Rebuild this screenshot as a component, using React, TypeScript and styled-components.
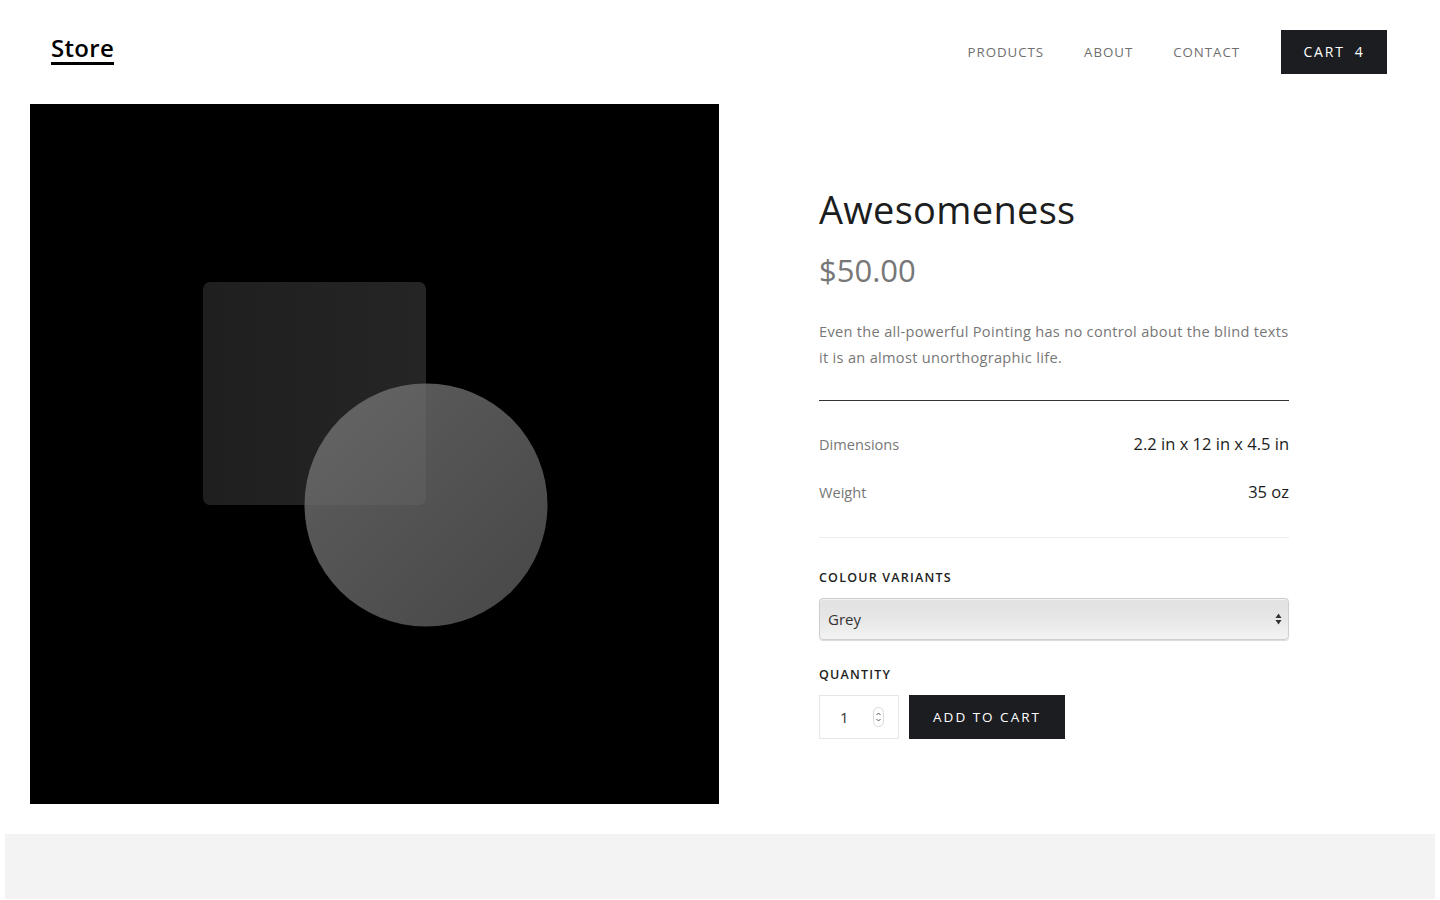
import React from "react";
import styled, { createGlobalStyle } from "styled-components";

const Global = createGlobalStyle`
  * { box-sizing: border-box; }
  html, body { margin: 0; padding: 0; background: #fff; }
  body { font-family: "Open Sans", "Noto Sans", sans-serif; color: #1c1d20; }
`;

const Page = styled.div`
  width: 1440px;
  display: flex;
  flex-direction: column;
`;

const Header = styled.header`
  height: 104px;
  display: flex;
  align-items: center;
  justify-content: space-between;
  padding: 0 53px 0 51px;
`;

const Logo = styled.a`
  font-size: 24px;
  font-weight: 600;
  color: #000;
  text-decoration: none;
  border-bottom: 3px solid #000;
  line-height: 26px;
  padding-bottom: 1px;
  margin-top: -4px;
  letter-spacing: 0.3px;
`;

const Nav = styled.nav`
  display: flex;
  align-items: center;
  gap: 40px;
`;

const NavLink = styled.a`
  font-size: 13.3px;
  letter-spacing: 0.95px;
  color: #6f6f6f;
  text-transform: uppercase;
  text-decoration: none;
`;

const CartButton = styled.a`
  margin-left: 1px;
  width: 106px;
  height: 44px;
  background: #1c1d20;
  color: #fff;
  display: flex;
  align-items: center;
  justify-content: center;
  font-size: 14px;
  letter-spacing: 1.8px;
  text-decoration: none;
  gap: 10px;
  padding-bottom: 1px;
`;

const Main = styled.main`
  display: grid;
  grid-template-columns: 689px 1fr;
  padding-left: 30px;
`;

const ImageBox = styled.div`
  width: 689px;
  height: 700px;
  background: #000;
  overflow: hidden;
`;

const Details = styled.section`
  padding: 79px 0 0 100px;
  width: 570px;
  display: flex;
  flex-direction: column;
`;

const Title = styled.h1`
  margin: 0;
  font-size: 38px;
  font-weight: 400;
  line-height: 52px;
  color: #1c1d20;
  letter-spacing: 0.3px;
`;

const Price = styled.div`
  margin-top: 13px;
  font-size: 31px;
  line-height: 44px;
  color: #777;
`;

const Description = styled.p`
  margin: 26px 0 0;
  font-size: 14.6px;
  line-height: 26px;
  color: #777;
  letter-spacing: 0.3px;
`;

const Rule = styled.hr<{ $light?: boolean }>`
  margin: 0;
  border: 0;
  height: 1px;
  background: ${(p) => (p.$light ? "#ececec" : "#333")};
`;

const Specs = styled.dl`
  margin: 0;
  padding: 31px 0 33px;
  display: flex;
  flex-direction: column;
  gap: 24px;
`;

const SpecRow = styled.div`
  display: flex;
  justify-content: space-between;
  align-items: baseline;
  height: 24px;
`;

const SpecName = styled.dt`
  font-size: 14.6px;
  color: #777;
`;

const SpecValue = styled.dd`
  margin: 0;
  font-size: 16.5px;
  color: #1c1d20;
`;

const Label = styled.div`
  font-size: 12.5px;
  font-weight: 600;
  letter-spacing: 1.2px;
  color: #1c1d20;
  text-transform: uppercase;
  line-height: 16px;
`;

const Field = styled.div<{ $gapTop: number }>`
  display: flex;
  flex-direction: column;
  gap: 12px;
  margin-top: ${(p) => p.$gapTop}px;
`;

const Spacer = styled.div`
  height: 30px;
`;

const SelectWrap = styled.div`
  position: relative;
  width: 470px;
  height: 42px;
`;

const Select = styled.select`
  appearance: none;
  width: 100%;
  height: 100%;
  border: 1px solid #cfcfcf;
  border-radius: 4px;
  background: linear-gradient(#e2e2e2, #e6e6e6 45%, #f3f3f3);
  box-shadow: inset 0 1px 1px rgba(255,255,255,0.6), 0 0.5px 1px rgba(0,0,0,0.15);
  font-family: inherit;
  font-size: 15px;
  color: #333;
  padding: 0 30px 0 8px;
  outline: none;
`;

const SelectArrows = styled.span`
  position: absolute;
  right: 7px;
  top: 50%;
  transform: translateY(-50%);
  display: flex;
  pointer-events: none;
`;

const QtyRow = styled.div`
  display: flex;
  gap: 10px;
`;

const QtyWrap = styled.div`
  position: relative;
  width: 80px;
  height: 44px;
`;

const QtyInput = styled.input`
  appearance: textfield;
  -moz-appearance: textfield;
  width: 100%;
  height: 100%;
  border: 1px solid #e6e6e6;
  font-family: inherit;
  font-size: 15px;
  color: #333;
  padding: 0 0 0 20px;
  outline: none;
  &::-webkit-inner-spin-button,
  &::-webkit-outer-spin-button { -webkit-appearance: none; margin: 0; }
`;

const Spinner = styled.span`
  position: absolute;
  right: 15px;
  top: 12px;
  width: 11px;
  height: 20px;
  border: 1px solid #d8d8d8;
  border-radius: 6px;
  display: flex;
  align-items: center;
  justify-content: center;
  pointer-events: none;
`;

const AddButton = styled.button`
  width: 156px;
  height: 44px;
  border: 0;
  background: #1c1d20;
  color: #fff;
  font-family: inherit;
  font-size: 13.5px;
  letter-spacing: 2px;
  text-transform: uppercase;
  cursor: pointer;
`;

const Footer = styled.footer`
  margin: 30px 5px 2px;
  height: 65px;
  background: #f3f3f3;
`;

function Artwork() {
  return (
    <svg width="689" height="700" viewBox="0 0 689 700">
      <defs>
        <linearGradient id="sq" x1="0" y1="0" x2="1" y2="0">
          <stop offset="0" stopColor="#1f1f1f" />
          <stop offset="1" stopColor="#252525" />
        </linearGradient>
        <linearGradient id="ci" x1="0" y1="0" x2="1" y2="1">
          <stop offset="0" stopColor="#767676" />
          <stop offset="1" stopColor="#585858" />
        </linearGradient>
      </defs>
      <rect x="173" y="178" width="223" height="223" rx="7" fill="url(#sq)" />
      <circle cx="396" cy="401" r="121.5" fill="url(#ci)" fillOpacity="0.8" />
    </svg>
  );
}

export default function App() {
  return (
    <Page>
      <Global />
      <Header>
        <Logo href="#">Store</Logo>
        <Nav>
          <NavLink href="#">Products</NavLink>
          <NavLink href="#">About</NavLink>
          <NavLink href="#">Contact</NavLink>
          <CartButton href="#">
            <span>CART</span>
            <span>4</span>
          </CartButton>
        </Nav>
      </Header>
      <Main>
        <ImageBox>
          <Artwork />
        </ImageBox>
        <Details>
          <Title>Awesomeness</Title>
          <Price>$50.00</Price>
          <Description>
            Even the all-powerful Pointing has no control about the blind texts it is an almost
            unorthographic life.
          </Description>
          <Spacer />
          <Rule />
          <Specs>
            <SpecRow>
              <SpecName>Dimensions</SpecName>
              <SpecValue>2.2 in x 12 in x 4.5 in</SpecValue>
            </SpecRow>
            <SpecRow>
              <SpecName>Weight</SpecName>
              <SpecValue>35 oz</SpecValue>
            </SpecRow>
          </Specs>
          <Rule $light />
          <Field $gapTop={32}>
            <Label>Colour Variants</Label>
            <SelectWrap>
              <Select defaultValue="Grey">
                <option>Grey</option>
                <option>Black</option>
                <option>White</option>
              </Select>
              <SelectArrows>
                <svg width="7" height="12" viewBox="0 0 7 12">
                  <path d="M3.5 0.5 L6.5 5 H0.5 Z" fill="#333" />
                  <path d="M3.5 11.5 L6.5 7 H0.5 Z" fill="#333" />
                </svg>
              </SelectArrows>
            </SelectWrap>
          </Field>
          <Field $gapTop={27}>
            <Label>Quantity</Label>
            <QtyRow>
              <QtyWrap>
                <QtyInput type="number" defaultValue={1} min={1} />
                <Spinner>
                  <svg width="7" height="14" viewBox="0 0 7 14">
                    <path d="M1.5 5 L3.5 3 L5.5 5" stroke="#555" strokeWidth="1" fill="none" />
                    <path d="M1.5 9 L3.5 11 L5.5 9" stroke="#555" strokeWidth="1" fill="none" />
                  </svg>
                </Spinner>
              </QtyWrap>
              <AddButton>Add to cart</AddButton>
            </QtyRow>
          </Field>
        </Details>
      </Main>
      <Footer />
    </Page>
  );
}
